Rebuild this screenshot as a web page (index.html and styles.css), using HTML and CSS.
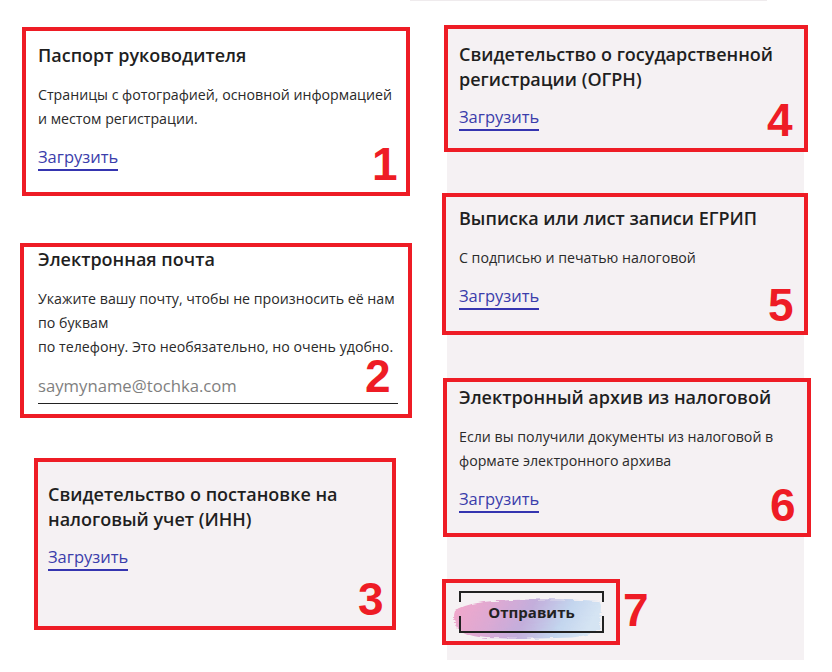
FILE: index.html
```html
<!DOCTYPE html>
<html lang="ru">
<head>
<meta charset="utf-8">
<title>Документы</title>
<link rel="stylesheet" href="styles.css">
</head>
<body>
<div class="topline"></div>
<div class="cols">
  <div class="col-left">
    <section class="card card-1">
      <h3 class="card-title">Паспорт руководителя</h3>
      <p class="card-text">Страницы с фотографией, основной информацией<br>и местом регистрации.</p>
      <a class="upload" href="#">Загрузить</a>
      <span class="mark mark-1">1</span>
    </section>
    <section class="card card-2">
      <h3 class="card-title">Электронная почта</h3>
      <p class="card-text">Укажите вашу почту, чтобы не произносить её нам<br>по буквам<br>по телефону. Это необязательно, но очень удобно.</p>
      <input class="email" type="email" placeholder="saymyname@tochka.com">
      <span class="mark mark-2">2</span>
    </section>
    <section class="card card-3 shaded">
      <h3 class="card-title">Свидетельство о постановке на<br>налоговый учет (ИНН)</h3>
      <a class="upload" href="#">Загрузить</a>
      <span class="mark mark-3">3</span>
    </section>
  </div>
  <div class="col-right">
    <div class="panel">
      <section class="card card-4">
        <h3 class="card-title">Свидетельство о государственной<br>регистрации (ОГРН)</h3>
        <a class="upload" href="#">Загрузить</a>
        <span class="mark mark-4">4</span>
      </section>
      <section class="card card-5">
        <h3 class="card-title">Выписка или лист записи ЕГРИП</h3>
        <p class="card-text">С подписью и печатью налоговой</p>
        <a class="upload" href="#">Загрузить</a>
        <span class="mark mark-5">5</span>
      </section>
      <section class="card card-6">
        <h3 class="card-title">Электронный архив из налоговой</h3>
        <p class="card-text">Если вы получили документы из налоговой в<br>формате электронного архива</p>
        <a class="upload" href="#">Загрузить</a>
        <span class="mark mark-6">6</span>
      </section>
      <div class="card card-7">
        <div class="send-wrap">
          <svg class="brush" width="152" height="44" viewBox="0 0 152 44" aria-hidden="true">
            <defs>
              <linearGradient id="brushGrad" x1="0" y1="0" x2="1" y2="0.15">
                <stop offset="0" stop-color="#f4a2c6"/>
                <stop offset="0.3" stop-color="#dca3d1"/>
                <stop offset="0.55" stop-color="#bfa9da"/>
                <stop offset="0.8" stop-color="#bfd3ee"/>
                <stop offset="1" stop-color="#d3e3f3"/>
              </linearGradient>
              <filter id="rough" x="-5%" y="-10%" width="110%" height="120%">
                <feTurbulence type="fractalNoise" baseFrequency="0.08 0.6" numOctaves="2" seed="3" result="n"/>
                <feDisplacementMap in="SourceGraphic" in2="n" scale="4" xChannelSelector="R" yChannelSelector="G"/>
              </filter>
            </defs>
            <path filter="url(#rough)" fill="url(#brushGrad)" opacity="0.92" d="M3,14 C14,6 34,4 60,3 C90,2 118,2 147,4 L149,8 L148,32 C140,38 126,41 104,41 C80,42 55,42 34,41 C22,40 12,37 6,31 C2,26 1,19 3,14 Z"/>
          </svg>
          <button class="send" type="button">Отправить</button>
        </div>
        <span class="mark mark-7">7</span>
      </div>
    </div>
  </div>
</div>
</body>
</html>
```
FILE: styles.css
```css
* { box-sizing: border-box; }
body {
  margin: 0;
  background: #fff;
  font-family: "Open Sans", "Noto Sans", sans-serif;
  color: #222;
}
.topline {
  height: 1px;
  width: 357px;
  margin-left: 410px;
  background: #efebed;
}
.cols { display: flex; align-items: flex-start; }
.col-left { width: 420px; flex: none; display: flex; flex-direction: column; }
.col-right { flex: none; }

.panel {
  margin-left: 27px;
  margin-top: 24px;
  width: 357px;
  background: #f5f1f3;
  padding-bottom: 15px;
  display: flex;
  flex-direction: column;
}

.card {
  position: relative;
  border: 4px solid #ee1c25;
  background: #fff;
}
.shaded, .panel .card { background: #f5f1f3; }

.card-1 { margin: 26px 0 0 22px; width: 388px; height: 169px; padding: 12px 12px 0; }
.card-2 { margin: 47px 0 0 20px; width: 392px; height: 175px; padding: 0 10px 0 14px; }
.card-3 { margin: 40px 0 0 34px; width: 362px; height: 172px; padding: 20px 10px 0; }
.card-4 { margin: 0 0 0 -3px; width: 364px; height: 127px; padding: 13px 11px 0; }
.card-5 { margin: 41px 0 0 -5px; width: 366px; height: 142px; padding: 9px 13px 0; }
.card-6 { margin: 43px 0 0 -4px; width: 368px; height: 159px; padding: 3px 12px 0; }
.card-7 { margin: 42px 0 0 -5px; width: 178px; height: 66px; padding: 8px 13px 0; }

.card-title {
  margin: 0;
  font-size: 18px;
  line-height: 25px;
  font-weight: 600;
  color: #1f1f1f;
}
.card-text {
  margin: 15px 0 0;
  font-size: 14.2px;
  line-height: 24px;
  color: #2a2a2a;
}
.upload {
  display: inline-block;
  margin-top: 14px;
  font-size: 16.5px;
  line-height: 24px;
  color: #3b3dab;
  text-decoration: none;
  border-bottom: 2px solid #3535b0;
}
.card-title + .upload { margin-top: 13px; }

.email {
  display: block;
  width: 100%;
  margin-top: 15px;
  padding: 0 0 5px;
  border: 0;
  border-bottom: 1px solid #222;
  background: transparent;
  font-family: inherit;
  font-size: 16.7px;
  line-height: 24px;
  color: #222;
  outline: none;
}
.email::placeholder { color: #7f7f7f; }

.mark {
  position: absolute;
  font-family: "Liberation Sans", Arial, sans-serif;
  font-weight: bold;
  font-size: 46px;
  line-height: 34px;
  color: #ee1c25;
}
.mark-1 { left: 346px; top: 116px; }
.mark-2 { left: 341px; top: 112px; }
.mark-3 { left: 320px; top: 120px; }
.mark-4 { left: 319px; top: 74px; }
.mark-5 { left: 322px; top: 91px; }
.mark-6 { left: 323px; top: 106px; }
.mark-7 { left: 177px; top: 10px; }

.send-wrap {
  position: relative;
  width: 145px;
  height: 42px;
}
.brush {
  position: absolute;
  left: -7px;
  top: 6px;
  display: block;
}
.send {
  position: relative;
  display: block;
  width: 145px;
  height: 42px;
  padding: 0;
  border: 0;
  border-top: 2px solid #222;
  border-bottom: 2px solid #222;
  background: transparent;
  font-family: inherit;
  font-size: 15px;
  font-weight: 700;
  color: #222;
  line-height: 38px;
  cursor: pointer;
}
.send::before, .send::after {
  content: "";
  position: absolute;
  top: -2px;
  bottom: -2px;
  width: 2px;
  background: linear-gradient(to bottom, #222 0 11px, transparent 11px 25px, #222 25px);
}
.send::before { left: 0; }
.send::after { right: 0; }
```
